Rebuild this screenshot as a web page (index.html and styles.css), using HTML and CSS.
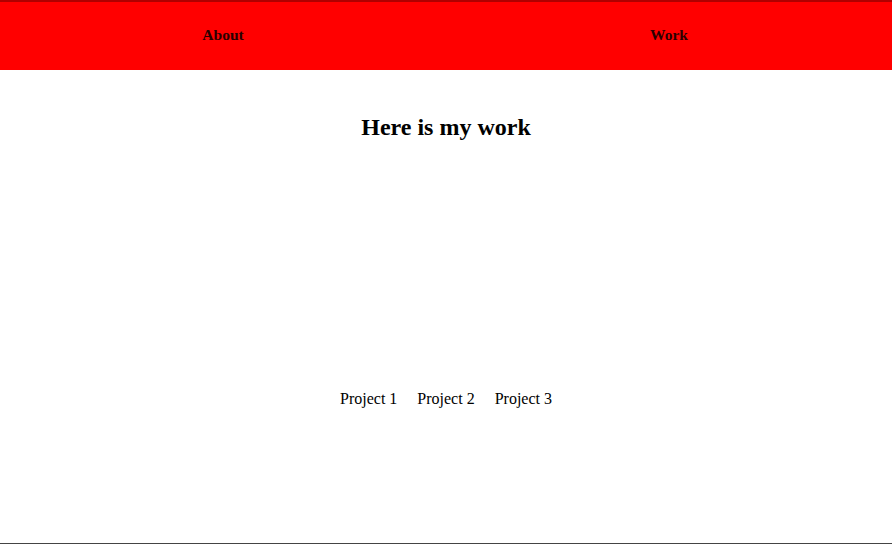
FILE: index.html
```html
<!DOCTYPE html>
<html>
<head>
<meta charset="utf-8">
<link rel="stylesheet" href="styles.css">
</head>
<body>
<div class="page">
  <header class="nav">
    <a class="nav-item">About</a>
    <a class="nav-item">Work</a>
  </header>
  <main class="content">
    <h1 class="title">Here is my work</h1>
    <ul class="projects">
      <li>Project 1</li>
      <li>Project 2</li>
      <li>Project 3</li>
    </ul>
  </main>
</div>
</body>
</html>
```
FILE: styles.css
```css
html, body {
  margin: 0;
  padding: 0;
}
body {
  font-family: "Liberation Serif", "Times New Roman", serif;
  color: #000;
  background: #fff;
}
.page {
  height: 544px;
  box-sizing: border-box;
  border-bottom: 1px solid #444;
  display: flex;
  flex-direction: column;
}
.nav {
  display: grid;
  grid-template-columns: 1fr 1fr;
  align-items: center;
  height: 68px;
  background: #ff0000;
  border-top: 2px solid #b00000;
}
.nav-item {
  text-align: center;
  font-weight: bold;
  font-size: 15.5px;
  color: #2a0000;
  padding-bottom: 3px;
}
.content {
  display: flex;
  flex-direction: column;
  align-items: center;
}
.title {
  font-size: 24px;
  margin: 44px 0 0;
  line-height: 27px;
}
.projects {
  list-style: none;
  margin: 249px 0 0;
  padding: 0;
  display: flex;
  gap: 20px;
  font-size: 16px;
}
```
